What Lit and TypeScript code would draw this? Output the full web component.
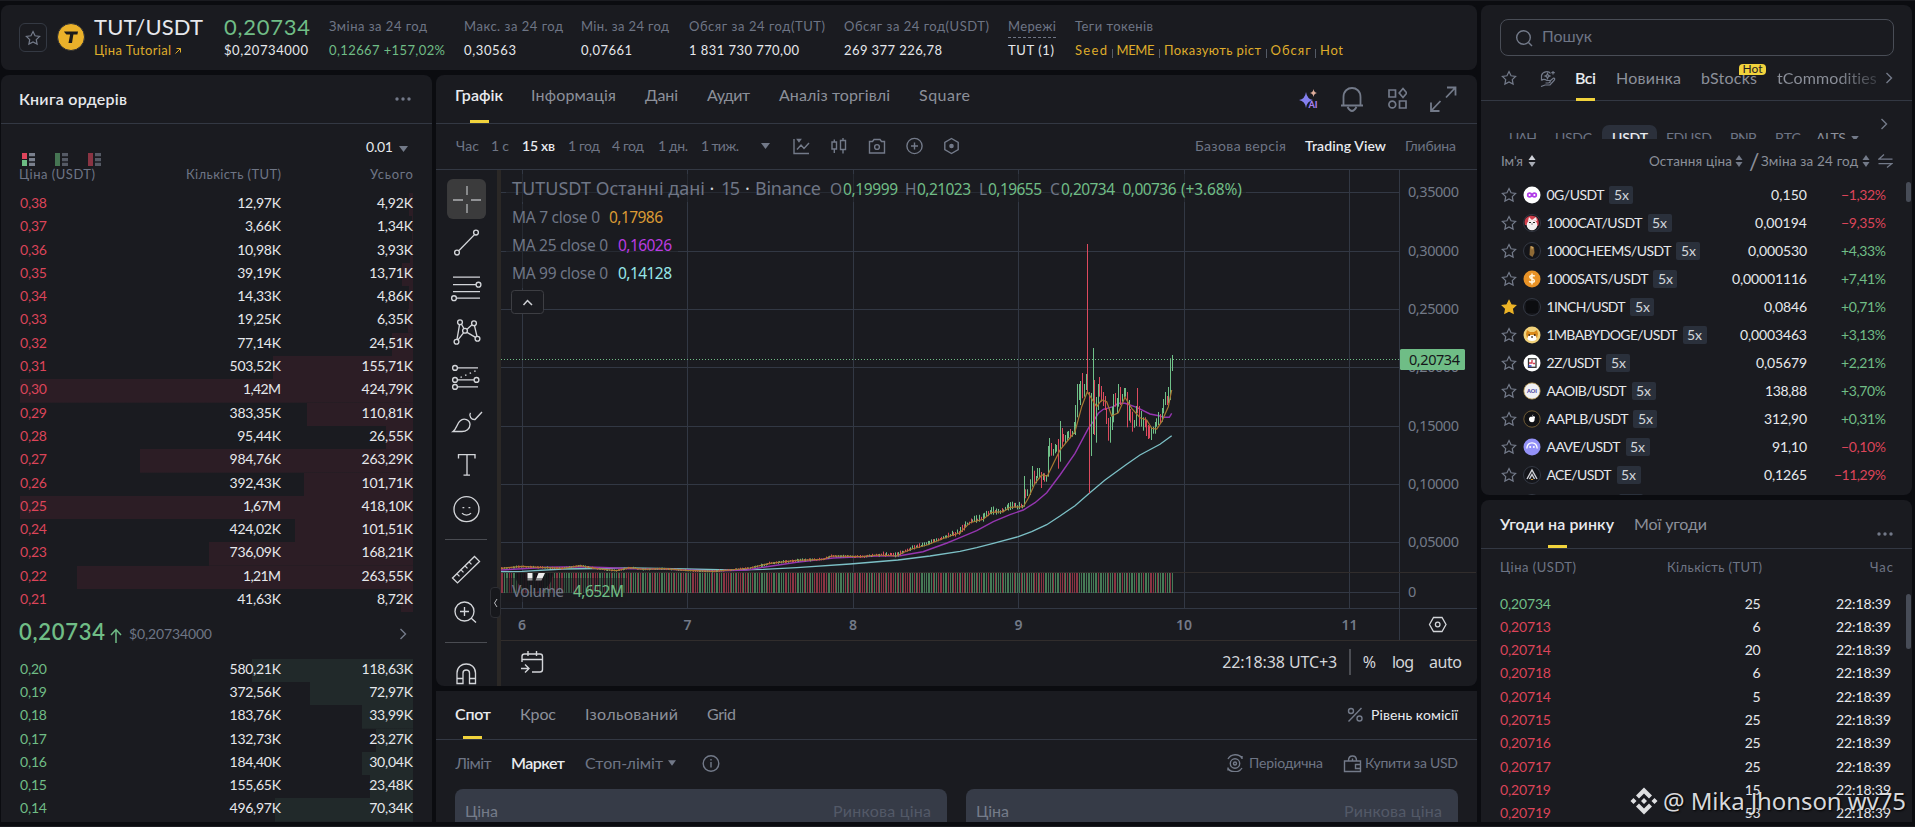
import { LitElement, html, svg, css } from "lit";

type Row = [string, string, string, number];

const asks: Row[] = [
  ["0,38", "12,97K", "4,92K", 4], ["0,37", "3,66K", "1,34K", 1], ["0,36", "10,98K", "3,93K", 3],
  ["0,35", "39,19K", "13,71K", 11], ["0,34", "14,33K", "4,86K", 4], ["0,33", "19,25K", "6,35K", 5],
  ["0,32", "77,14K", "24,51K", 21], ["0,31", "503,52K", "155,71K", 140], ["0,30", "1,42M", "424,79K", 393],
  ["0,29", "383,35K", "110,81K", 106], ["0,28", "95,44K", "26,55K", 27], ["0,27", "984,76K", "263,29K", 273],
  ["0,26", "392,43K", "101,71K", 109], ["0,25", "1,67M", "418,10K", 393], ["0,24", "424,02K", "101,51K", 118],
  ["0,23", "736,09K", "168,21K", 204], ["0,22", "1,21M", "263,55K", 336], ["0,21", "41,63K", "8,72K", 12],
];
const bids: Row[] = [
  ["0,20", "580,21K", "118,63K", 161], ["0,19", "372,56K", "72,97K", 103], ["0,18", "183,76K", "33,99K", 51],
  ["0,17", "132,73K", "23,27K", 37], ["0,16", "184,40K", "30,04K", 51], ["0,15", "155,65K", "23,48K", 43],
  ["0,14", "496,97K", "70,34K", 138],
];

const pairs: [string, number, string, number, string, number][] = [
  ["0G", 58, "0,150", 36, "−1,32%", 45], ["1000CAT", 96, "0,00194", 52, "−9,35%", 45],
  ["1000CHEEMS", 125, "0,000530", 59, "+4,33%", 45], ["1000SATS", 102, "0,00001116", 75, "+7,41%", 45],
  ["1INCH", 79, "0,0846", 43, "+0,71%", 45], ["1MBABYDOGE", 131, "0,0003463", 67, "+3,13%", 45],
  ["2Z", 55, "0,05679", 51, "+2,21%", 45], ["AAOIB", 80, "138,88", 42, "+3,70%", 45],
  ["AAPLB", 82, "312,90", 43, "+0,31%", 45], ["AAVE", 74, "91,10", 35, "−0,10%", 45],
  ["ACE", 65, "0,1265", 43, "−11,29%", 52], ["ACH", 67, "0,00512", 50, "+1,04%", 45],
];

const trades: [string, string, boolean][] = [
  ["0,20734", "25", true], ["0,20713", "6", false], ["0,20714", "20", false], ["0,20718", "6", false],
  ["0,20714", "5", false], ["0,20715", "25", false], ["0,20716", "25", false], ["0,20717", "25", false],
  ["0,20719", "15", false], ["0,20719", "53", false],
];

/* Candles as x, high, low (in thirds of a pixel from the plot's 960/220 corner), 1 = up. */
const candles: [number, number, number, number][] = [
  [192,768,860,1],[196,808,835,0],[203,808,828,1],[210,778,825,1],[217,738,800,1],[223,752,792,0],[229,768,790,1],
  [232,744,775,1],[238,744,775,1],[244,756,804,0],[250,760,780,1],[253,760,785,0],[259,765,785,1],[265,678,770,1],
  [268,654,710,1],[274,669,707,0],[280,687,707,1],[286,672,700,1],[289,675,695,1],[295,657,746,0],[301,603,725,1],
  [307,624,682,0],[310,642,665,0],[316,645,670,1],[322,635,662,1],[325,633,655,1],[331,627,655,0],[337,633,650,1],
  [343,606,642,1],[346,555,645,1],[352,492,592,1],[358,492,540,1],[361,483,555,1],[367,459,535,0],[373,492,530,1],
  [379,462,510,1],[382,72,520,0],[388,516,820,0],[394,519,708,1],[400,384,642,1],[403,480,645,0],[409,531,668,1],
  [415,492,570,1],[418,471,530,0],[424,498,545,0],[430,516,558,0],[436,528,570,0],[439,565,612,0],[445,594,662,0],
  [451,591,668,1],[457,560,630,1],[460,522,607,1],[466,519,560,0],[472,534,580,1],[475,492,560,1],[481,501,555,0],
  [487,522,545,1],[493,504,533,1],[496,504,530,1],[502,516,622,0],[508,540,602,1],[511,567,608,0],[517,575,635,0],
  [523,600,623,1],[529,558,618,1],[532,504,580,0],[538,558,620,0],[544,573,620,1],[550,592,632,1],[556,592,622,0],
  [559,600,648,0],[565,615,657,0],[568,618,655,0],[574,622,660,1],[580,620,641,1],[586,606,641,1],[589,595,620,1],
  [595,576,615,1],[601,582,612,0],[607,564,605,1],[610,537,580,1],[616,516,555,1],[622,528,555,0],[625,501,550,1],
  [631,415,540,1],[637,405,453,1],
];

type P = [number, number];
const near = (a: P[]): P[] => a.map(([x, y]) => [960 + x / 3, 220 + y / 3]);
const far = (a: P[]): P[] => a.map(([x, y]) => [430 + x / 3, 480 + y / 3]);

const ma7: P[] = [
  ...far([[213,265],[277,259],[330,262],[400,265],[450,257],[500,266],[560,272],[600,263],[640,268],[700,266],[770,271],[850,274],[900,270],[960,264],[1020,250],[1100,241],[1180,238],[1205,228],[1260,229]]),
  [862, 556.7], [877, 555], [897, 556], [902, 553], [912, 549], [927, 545], [947, 537],
  ...near([[0,938],[30,908],[70,898],[95,877],[130,875],[150,862],[190,860],[205,835],[225,790],[245,765],[262,768],[300,690],[345,635],[365,560],[382,515],[410,560],[425,540],[440,545],[455,588],[475,578],[495,532],[515,565],[540,593],[560,600],[575,625],[590,627],[605,605],[625,560],[635,510]]),
];
const ma25: P[] = [
  ...far([[213,270],[277,266],[350,262],[450,260],[540,263],[600,266],[700,267],[770,270],[850,273],[950,270],[1000,262],[1100,247],[1210,234]]),
  [877, 556], [900, 555.7], [923, 551.7], [947, 543],
  ...near([[0,953],[50,932],[100,905],[150,884],[190,870],[225,848],[260,818],[300,765],[345,700],[385,625],[400,605],[415,580],[430,568],[460,560],[475,550],[495,550],[530,562],[570,582],[600,588],[612,592],[628,592],[635,580]]),
];
const ma99: P[] = [
  ...far([[213,275],[277,274],[400,267],[600,264],[770,267],[900,270],[1000,268],[1100,263],[1260,252]]),
  [898, 560], [930, 556],
  ...near([[0,994],[50,983],[100,970],[175,950],[215,935],[260,914],[300,888],[345,857],[388,820],[435,780],[500,733],[540,705],[600,673],[635,647]]),
];
const line = (a: P[]) => a.map(([x, y]) => `${x.toFixed(1)},${y.toFixed(1)}`).join(" ");
const at = (a: P[], x: number) => {
  for (let i = 1; i < a.length; i++)
    if (x <= a[i][0]) {
      const [x0, y0] = a[i - 1], [x1, y1] = a[i];
      return y0 + ((y1 - y0) * (x - x0)) / (x1 - x0);
    }
  return a[a.length - 1][1];
};
const rnd = (n: number) => {
  const v = Math.sin(n * 12.9898 + 4.1) * 43758.5453;
  return v - Math.floor(v);
};

/* Early, quiet part of the series plus the volume strip, as two path strings per colour. */
const wick = { up: "", down: "" };
const vol = { up: "", down: "" };
for (let i = 0; i < 391; i++) {
  const x = Math.floor(501 + i * 1.722) + 0.5;
  if (x > 1173) break;
  const up = rnd(i) > 0.44;
  if (x < 1023) {
    const amp = x < 760 ? 0.9 : x < 880 ? 1.4 : x < 950 ? 2.6 : 4.5;
    const y = at(ma7, x) - (x > 880 ? 1 : 0);
    const d = `M${x} ${(y - 0.4 - rnd(i + 500) * amp).toFixed(1)}V${(y + 0.6 + rnd(i + 900) * amp * 0.7).toFixed(1)}`;
    if (up) wick.up += d; else wick.down += d;
  }
  if (up) vol.up += `M${x} 573V593`; else vol.down += `M${x} 573V593`;
}
for (const [x, a, b, up] of candles) {
  const d = `M${Math.floor(960 + x / 3) + 0.5} ${(220 + a / 3).toFixed(1)}V${(220 + b / 3).toFixed(1)}`;
  if (up) wick.up += d; else wick.down += d;
}

/* A run of text set to a given advance width. */
const t = (s: string, w: number, c = "") => html`<span class="t ${c}" data-w=${w}>${s}</span>`;
const ic = (x: number, y: number, w: number, h: number, body: unknown, c = "") =>
  html`<svg class="ic ${c}" width=${w} height=${h} viewBox="${x} ${y} ${w} ${h}">${body}</svg>`;

const starPath = "M9 1.8l2.3 4.7 5.1.7-3.7 3.6.9 5.1L9 13.5l-4.6 2.4.9-5.1L1.6 7.2l5.1-.7z";
const star = (c = "") => html`<svg class="ic ${c}" width="16" height="16" viewBox="0 0 18 18"><path d=${starPath} /></svg>`;
const caret = (w = 9) => html`<svg width=${w} height="6" viewBox="0 0 9 6"><path d="M0 0h9L4.5 6z" fill="#727988" /></svg>`;
const sorter = (a: string, b: string) => html`<svg width="8" height="12" viewBox="0 0 8 12"><path d="M.5 5L4 0l3.500 5z" fill=${a} /><path d="M.5 7L4 12l3.500-5z" fill=${b} /></svg>`;
const chevron = html`<svg class="ic" width="8" height="12" viewBox="0 0 8 12"><path d="M1.500 1l5 5-5 5" /></svg>`;

const coin = (n: string) => {
  const ring = svg`<circle cx="9" cy="9" r="8.500" fill="#14151a" stroke="#343944" />`;
  const g: Record<string, unknown> = {
    "0G": svg`<circle cx="9" cy="9" r="8.500" fill="#fff" /><g fill="none" stroke="#b13be8" stroke-width="1.700"><circle cx="6.600" cy="9" r="1.900" /><circle cx="11.400" cy="9" r="1.900" /></g>`,
    "1000CAT": svg`${ring}<path d="M2 11C0 4 6 1 10 2c5 0 7 6 5 10z" fill="#d13f4c" /><circle cx="9" cy="11" r="5.300" fill="#f1eeee" /><path d="M5 7l1-4 3 3zM9 6l4-3 1 4z" fill="#f1eeee" /><path d="M6 8.500h2M10 8.500h2M8.500 10h1" stroke="#222" />`,
    "1000CHEEMS": svg`${ring}<path d="M7 4l4 1 .5 6-2 4-3-2z" fill="#8f6a35" /><path d="M8 4l2 1-1 3z" fill="#d9b36f" />`,
    "1000SATS": svg`<circle cx="9" cy="9" r="8.500" fill="#e89226" /><path d="M11.800 6.200c-1-1-5-1.200-5 .7 0 2.200 4.600 1.500 4.600 3.800 0 2-4 2-5.200.5M9 3.500v11" fill="none" stroke="#fff4dc" stroke-width="1.500" />`,
    "1INCH": svg`${ring}<rect x="3" y="3" width="12" height="12" rx="2" fill="#0c0d10" />`,
    "1MBABYDOGE": svg`<circle cx="9" cy="9" r="8.500" fill="#f2d27a" /><path d="M3 8l1-4 3 2h4l3-2 1 4-1 4H4z" fill="#d98a1c" /><ellipse cx="9" cy="12" rx="4.500" ry="3" fill="#fff" /><path d="M5.500 9h1.500M11 9h1.500M8.300 11h1.500" stroke="#2b1c10" stroke-width="1.300" />`,
    "2Z": svg`<circle cx="9" cy="9" r="8.500" fill="#fff" /><rect x="5.500" y="4.800" width="7.500" height="8.500" fill="none" stroke="#333" stroke-width="1.300" /><path d="M6 9h3v-3" fill="none" stroke="#d43e52" stroke-width="1.400" /><path d="M5.500 12h3" stroke="#3848c7" stroke-width="1.600" /><path d="M10 9.500h2" stroke="#d43e52" stroke-width="1.600" />`,
    AAOIB: svg`<circle cx="9" cy="9" r="8.100" fill="#f0f1f5" stroke="#c8a659" stroke-width=".8" /><text x="9" y="11" font-size="5.500" font-weight="900" text-anchor="middle" fill="#4a449e">AOI</text>`,
    AAPLB: svg`<circle cx="9" cy="9" r="8.200" fill="#111215" stroke="#6e5a34" /><path d="M9 6.800c3-1.200 3.600.3 2.600 2 .3 2.400-1.600 4-2.600 3.300-1.700.7-3.400-1.500-3-3.500.4-2 1.800-2.200 3-1.800zM9 6.300c0-1.200.7-1.800 1.500-1.900" fill="#fff" />`,
    AAVE: svg`<circle cx="9" cy="9" r="8.500" fill="#9391f7" /><path d="M3.800 10.500C4.500 3 13.500 3 14.200 10.500" fill="none" stroke="#fff" stroke-width="1.400" /><circle cx="7.200" cy="9" r="1" fill="#fff" /><circle cx="10.800" cy="9" r="1" fill="#fff" />`,
    ACE: svg`${ring}<path d="M4 13L9 4l5 9M6.500 13L9 8.500l2.500 4.500" fill="none" stroke="#cfd1d6" stroke-width="1.400" /><path d="M8 13.500h2" stroke="#d89a2b" />`,
  };
  return html`<svg width="18" height="18" viewBox="0 0 18 18">${g[n] ?? ring}</svg>`;
};

const dayLabel = (n: string, x: number) => svg`<text class="day" x=${x} y="630">${n}</text>`;

class AppRoot extends LitElement {
  static styles = css`
    :host { display: block; width: 1915px; height: 827px; overflow: hidden; background: #0b0c10;
      font: 14px/20px Lato, "Open Sans", sans-serif; color: #e6e8ec; box-sizing: border-box; }
    * { box-sizing: border-box; }
    svg { display: block; flex: none; }
    .page { height: 827px; display: grid; grid-template-rows: 1px 821px 1fr 1px; }
    .edge { background: #1a1b20; }
    .main { display: grid; grid-template-columns: 1476px 431px; column-gap: 4px; padding: 4px 0 0 1px; height: 821px; }
    .left { display: grid; grid-template-columns: 431px 1041px; grid-template-rows: 65px 747px; gap: 5px 4px; }
    .card { background: #1a1b20; border-radius: 8px; overflow: hidden; }
    .flatb { border-radius: 8px 8px 0 0; }
    .t { white-space: pre; display: inline-block; }
    .ic { fill: none; stroke: #737a89; stroke-width: 1.4; }
    .mut { color: #6e7585; }
    .tab { color: #8c909a; }
    .b { font-weight: 600; }
    .w { color: #e9ebef; }
    .g { color: #70bd86; }
    .r { color: #dc4459; }
    .y { color: #dfac2b; }
    .right { text-align: right; }

    .head { grid-column: 1 / 3; display: grid; font-size: 13px; padding-left: 18px;
      grid-template-columns: 40px 35px 130px 105px 135px 117px 108px 155px 164px 67px 1fr; }
    .fav { width: 28px; height: 29px; margin-top: 18px; border: 1px solid #343943; border-radius: 6px; display: grid; place-items: center; }
    .logo { margin-top: 18px; margin-left: -2px; }
    .stat { display: flex; flex-direction: column; padding-top: 11px; }
    .stat .t { height: 22px; line-height: 20px; margin-bottom: 2px; align-self: flex-start; }
    .big { padding-top: 8px; }
    .big .t:first-child, .lg { font-size: 22px; height: 26px; line-height: 28px; margin-bottom: 1px; }
    .big .lnk .t { font-size: 13px; height: 20px; line-height: 20px; }
    .lnk { display: flex; align-items: flex-start; gap: 4px; }
    .lnk svg { margin-top: 8px; }
    .net .t { height: auto; line-height: 18px; }
    .net .dash { border-bottom: 1px dashed #6e7585; height: 22px; line-height: 20px; margin-bottom: 3px; }
    .tags { display: flex; }
    .sep { width: 1px; height: 9px; background: #555b66; margin: 9px 4px 0 4.500px; }

    .bar { display: flex; align-items: center; border-bottom: 1px solid #333843; }
    .book .bar { height: 49px; justify-content: space-between; padding: 0 21px 0 18px; font-size: 16px; }
    .opts { height: 40px; display: flex; justify-content: space-between; padding: 19px 24px 0 21px; }
    .modes { display: flex; gap: 20px; padding-top: 10px; }
    .prec { display: flex; gap: 6px; align-items: flex-start; margin-top: -6px; }
    .prec svg { margin-top: 9px; }
    .cols { display: grid; grid-template-columns: 130px 132px 132px; color: #6e7585; padding: 0 19px 0 18px; font-size: 13px; height: 29px; }
    .rows { display: flex; flex-direction: column; padding: 0 19px; }
    .row { height: 23.300px; display: grid; grid-template-columns: 130px 131px 132px; line-height: 20.500px;
      background-repeat: no-repeat; background-position: right; }
    .ask { background-image: linear-gradient(#2c1d25, #2c1d25); }
    .bid { background-image: linear-gradient(#21292a, #21292a); }
    .mid { height: 46.300px; display: grid; grid-template-columns: 91px 19px 1fr 12px; padding: 7px 21px 0 18px; line-height: 30px; }
    .mid svg { margin-top: 9px; }
    .mid .lg { margin-top: -1px; }

    .col { display: grid; grid-template-rows: 611px 131px; row-gap: 5px; }
    .chart { display: grid; grid-template-rows: 49px 46px 1fr; grid-template-columns: minmax(0, 1fr); }
    .tabs { display: grid; font-size: 16px; grid-template-columns: 76px 114px 62px 72px 140px 380px 1fr; padding-left: 19px;
      border-bottom: 1px solid #333843; align-items: start; }
    .tabs > .t { margin-top: 9px; line-height: 22px; }
    .on { position: relative; }
    .on::after { content: ""; position: absolute; left: calc(50% - 9.500px); bottom: var(--d, -19px); width: 19px; height: 3px; background: #f1d33c; }
    .tabs .on { --d: -17px; justify-self: start; }
    .acts { display: flex; gap: 22px; padding-top: 9px; }
    .times { display: grid; align-items: center; border-bottom: 1px solid #333843; padding: 0 0 2px 20px;
      grid-template-columns: 35px 31px 46px 44px 46px 43px 60px 31px 38px 38px 38px 38px 251px 110px 100px 1fr; }
    .body { display: grid; grid-template-columns: 61px 4px 1fr; height: 516px; }
    .tools { display: flex; flex-direction: column; padding-left: 8px; padding-top: 7px; position: relative; }
    .tools .ic { stroke: #d3d5d9; stroke-width: 1.350; }
    .tools hr { border: 0; height: 1px; background: #4a4c52; width: 42px; margin: 6.500px 0 7px 1px; flex: none; }
    .fold { position: absolute; left: 54px; top: 417px; width: 11px; height: 31px; background: #17181c; border: 1px solid #2e2f34; border-radius: 4px;
      display: grid; place-items: center; z-index: 2; }
    .rail { background: #2b2826; }
    .plot { display: grid; grid-template-rows: 471px 45px; font-family: "Noto Sans", sans-serif; }
    .foot { display: flex; align-items: center; font-size: 16px; color: #d4d6da; padding: 0 15px 3px 19px; }
    .foot i { width: 1.500px; height: 26px; background: #4b4d53; margin: 0 12px 0 12px; }
    .foot .sp { flex: 1; }
    .gl { stroke: #323844; stroke-width: 1; }
    .ax { fill: #737a88; font-size: 14.500px; }
    .day { fill: #737a88; font-size: 14px; font-weight: 600; text-anchor: middle; }
    .lg1 { fill: #6f7686; font-size: 18px; }
    .lg2 { fill: #6f7686; font-size: 15.500px; }

    .spot { border-radius: 0; }
    .spot .bar { height: 49px; padding: 0 19px; font-size: 16px; display: grid; grid-template-columns: 65px 65px 122px 640px 24px 1fr; }
    .spot .bar .t { margin-top: -2px; justify-self: start; }
    .spot .on { --d: -15px; }
    .fee { font-size: 14px; }
    .kinds { display: grid; height: 49px; align-items: center; padding: 0 19px 3px 19.500px; font-size: 16px;
      grid-template-columns: 55.500px 74px 83px 34px 524px 23px 94px 22px 1fr; }
    .kinds .s { font-size: 14px; }
    .ins { display: grid; grid-template-columns: 1fr 1fr; gap: 19px; padding: 0 19px; }
    .in { height: 40px; border-radius: 8px; background: #363b47; display: flex; justify-content: space-between; padding: 12px 16px 0 10px; font-size: 16px; color: #757c8a; }
    .in .ph { color: #535967; }

    .side { display: grid; grid-template-rows: 490px 322px; row-gap: 5px; }
    .search { margin: 14px 18px 0 19px; height: 37px; border: 1px solid #494d56; border-radius: 8px; display: flex; align-items: center; gap: 9px; padding-left: 14px; font-size: 16px; }
    .search .t { margin-top: -3px; }
    .cats { height: 45px; display: grid; grid-template-columns: 37px 37px 41px 85px 76px 108px 1fr; align-items: center; padding-left: 20px; font-size: 16px; border-bottom: 1px solid #333843; }
    .cats .t { margin-top: -1px; }
    .cats .on { --d: -13px; justify-self: start; }
    .wrap { position: relative; }
    .fadeout { background: linear-gradient(90deg, #8c909a 55%, #2b2d33); -webkit-background-clip: text; background-clip: text; color: transparent; }
    .hot { position: absolute; left: 38px; top: -4px; height: 11px; width: 27px; border-radius: 4px 4px 4px 0; background: #f1d33c; color: #1f2024; font-size: 12px; line-height: 10px; text-align: center; }
    .quotes { height: 39px; padding: 24px 0 0 28px; display: flex; overflow: hidden; font-size: 14px; }
    .q { display: flex; height: 14px; overflow: hidden; width: 364px; }
    .q > * { margin-top: 3px; line-height: 20px; flex: none; }
    .q .pill { background: #2b303b; border-radius: 7px 7px 0 0; margin-top: 0; padding: 3px 9px 0 10px; height: 30px; width: 55px; }
    .quotes .chv { margin: -7px 0 0 7px; }
    .lh { display: grid; grid-template-columns: 24px 124px 86px 14px 12px 101px 16px 1fr; height: 42px; padding-left: 20px; align-items: center; font-size: 13.500px; color: #8a8f99; }
    .lh > * { margin-top: 0; }
    .lh > :nth-child(2) { padding-left: 3px; }
    .slash { font-size: 23px; line-height: 20px; }
    .list { height: 314px; overflow: hidden; position: relative; margin-top: -1px; }
    .pair { height: 28px; display: grid; grid-template-columns: 22px 24px 1fr 80px 79px 26px; padding-left: 20px; align-items: center; }
    .pair .nm { display: flex; gap: 5px; align-items: center; margin-left: -0.500px; }
    .lev { width: 24px; height: 18px; line-height: 17px; text-align: center; border-radius: 2px; background: #2a303b; color: #d4d7dc; }
    .thumb { position: absolute; left: 425px; width: 5px; border-radius: 3px; background: #474c57; }
    .full { fill: #edb427; stroke: #edb427; }
    .deals { position: relative; border-radius: 8px 8px 0 0; }
    .deals .bar { height: 49px; padding: 0 19px; font-size: 16px; display: grid; grid-template-columns: 134px 243px 1fr; }
    .deals .bar .t { margin-top: 0; justify-self: start; }
    .deals .bar svg { margin-top: 20px; }
    .deals .on { --d: -14px; }
    .deals .cols { grid-template-columns: 130px 132px 131px; height: 44.500px; padding-top: 8px; padding-left: 19px; }
    .deal { display: grid; grid-template-columns: 130px 130.500px 130.500px; height: 23.300px; padding-left: 19px; }
    .stamp { position: absolute; left: 149px; bottom: 0; display: flex; align-items: center; gap: 5px; height: 42px; z-index: 3; font: 24px/42px "Noto Sans", sans-serif; color: #d8d9dc; text-shadow: 1px 1px 2px #000; }
  `;

  firstUpdated() {
    const range = document.createRange();
    this.renderRoot.querySelectorAll<HTMLElement>("[data-w]").forEach((el) => {
      const w = Number(el.dataset.w);
      const n = el.textContent!.length;
      if (!w || n < 2) return;
      range.selectNodeContents(el);
      const s = (w - range.getBoundingClientRect().width) / (n - 1);
      el.style.letterSpacing = `${s.toFixed(3)}px`;
      el.style.marginRight = `${(-s).toFixed(3)}px`;
    });
  }

  head() {
    const sep = html`<span class="sep"></span>`;
    return html`<div class="card head">
      <div class="fav">${star()}</div>
      <svg class="logo" width="28" height="28" viewBox="0 0 28 28"><circle cx="14" cy="14" r="13.500" fill="#eab12a" stroke="#2c2f36" />
        <path d="M7 8.500h14l-.6 3h-4L15 20h-3.500l1.600-8.500H9.500L8 10z" fill="#1b1a1a" /></svg>
      <div class="stat big">${t("TUT/USDT", 109)}<div class="lnk">${t("Ціна Tutorial", 77, "y")}<svg width="6" height="6" viewBox="0 0 6 6"><path d="M.5 5.500l5-5M1.500.5h4v4" fill="none" stroke="#dfac2b" /></svg></div></div>
      <div class="stat big">${t("0,20734", 86, "g")}${t("$0,20734000", 84)}</div>
      <div class="stat">${t("Зміна за 24 год", 98, "mut")}${t("0,12667 +157,02%", 116, "g")}</div>
      <div class="stat">${t("Макс. за 24 год", 99, "mut")}${t("0,30563", 52)}</div>
      <div class="stat">${t("Мін. за 24 год", 88, "mut")}${t("0,07661", 51)}</div>
      <div class="stat">${t("Обсяг за 24 год(TUT)", 136, "mut")}${t("1 831 730 770,00", 110)}</div>
      <div class="stat">${t("Обсяг за 24 год(USDT)", 145, "mut")}${t("269 377 226,78", 98)}</div>
      <div class="stat net">${t("Мережі", 48, "mut dash")}${t("TUT (1)", 46)}</div>
      <div class="stat">${t("Теги токенів", 78, "mut")}<div class="tags y">${t("Seed", 32)}${sep}${t("MEME", 38)}${sep}${t("Показують ріст", 97)}${sep}${t("Обсяг", 40)}${sep}${t("Hot", 23)}</div></div>
    </div>`;
  }

  dots() {
    return html`<svg width="16" height="4" viewBox="0 0 16 4"><g fill="#727988"><circle cx="2" cy="2" r="1.700" /><circle cx="8" cy="2" r="1.700" /><circle cx="14" cy="2" r="1.700" /></g></svg>`;
  }

  book() {
    const mode = (a: string, b: string, c: string) => html`<svg width="13" height="13" viewBox="0 0 13 13">
      <path d="M0 0h5v6H0z" fill=${a} /><path d=${a === b ? "M0 5h5v8H0z" : "M0 7h5v6H0z"} fill=${b} /><path d="M7 0h6v3.300H7zM7 4.900h6v3.300H7zM7 9.700h6V13H7z" fill=${c} /></svg>`;
    const width = (s: string) => 51.5 - (7 - s.length) * (s.endsWith("M") ? 6.75 : 7.7);
    const row = (r: Row, side: string, color: string) => html`<div class="row ${side}" style="background-size:${r[3]}px 100%">
      <span class=${color}>${t(r[0], 27)}</span><span class="right">${t(r[1], width(r[1]))}</span><span class="right">${t(r[2], width(r[2]))}</span></div>`;
    return html`<div class="card flatb book">
      <div class="bar">${t("Книга ордерів", 108, "b")}${this.dots()}</div>
      <div class="opts"><div class="modes">${mode("#e0455c", "#6dbd84", "#7a808d")}${mode("#467553", "#467553", "#555a65")}${mode("#8a3443", "#8a3443", "#555a65")}</div>
        <div class="prec">${t("0.01", 27)}${caret()}</div></div>
      <div class="cols"><span>${t("Ціна (USDT)", 76)}</span><span class="right">${t("Кількість (TUT)", 95)}</span><span class="right">${t("Усього", 43)}</span></div>
      <div class="rows">${asks.map((r) => row(r, "ask", "r"))}</div>
      <div class="mid"><span>${t("0,20734", 86, "g b lg")}</span>
        <svg width="12" height="16" viewBox="0 0 12 16"><path d="M6 15V2M1 7l5-5.500L11 7" fill="none" stroke="#70bd86" stroke-width="1.500" /></svg>
        <span class="mut">${t("$0,20734000", 83)}</span>${chevron}</div>
      <div class="rows">${bids.map((r) => row(r, "bid", "g"))}</div>
    </div>`;
  }

  chart() {
    const o = (x: number, y: number, r = 2.4) => svg`<circle cx=${x} cy=${y} r=${r} />`;
    return html`<div class="card chart">
      <div class="tabs">${t("Графік", 48, "w b on")}${t("Інформація", 85, "tab")}${t("Дані", 33, "tab")}${t("Аудит", 43, "tab")}${t("Аналіз торгівлі", 111, "tab")}${t("Square", 51, "tab")}
        <div class="acts">
          <svg width="20" height="30" viewBox="1299 84 20 30"><path d="M1306 92q1 7 7 8-6 1-7 8-1-7-7-8 6-1 7-8z" fill="#8480f0" /><path d="M1313.500 89q.5 3.500 3.500 4-3 .5-3.500 4-.5-3.500-3.500-4 3-.5 3.500-4z" fill="#dfae9b" /><text x="1308.500" y="108" font-size="9" font-weight="900" fill="#a77ff2">AI</text></svg>
          ${ic(1341, 84, 24, 30, svg`<path stroke-width="1.800" d="M1341 105.500h22M1343.500 105v-8c0-12 17-12 17 0v8M1347.500 107q4.500 8 9 0" />`)}
          ${ic(1387, 84, 20, 30, svg`<g stroke-width="1.700"><path d="M1389 90h6.500v7h-6.500zM1399.500 101h6.500v7h-6.500zM1403 88.500l3.800 4.500-3.800 4.500-3.800-4.500z" /><circle cx="1392.300" cy="104.500" r="3.400" /></g>`)}
          ${ic(1429, 84, 28, 30, svg`<path stroke-width="1.800" d="M1447 87.500h8.500v8M1455 88l-9 9.500M1439.500 111h-8.500v-8.500M1431.500 110.500l9-9.500" />`)}
        </div></div>
      <div class="times">${t("Час", 23, "mut")}${t("1 с", 18, "mut")}${t("15 хв", 33, "w b")}${t("1 год", 32, "mut")}${t("4 год", 32, "mut")}${t("1 дн.", 30, "mut")}${t("1 тиж.", 38, "mut")}
        ${caret()}
        ${ic(792, 137, 18, 18, svg`<path d="M794 139v14.500h15M797 149.500l4-4.500 3 3.500 5-5.500M797.500 139.500l3 0-1.500 2z" />`)}
        ${ic(830, 137, 18, 18, svg`<path d="M832 142h4.500v7H832zM840.500 140.500h5v9h-5zM834.300 139.500v2.500M834.300 149v4M843 138v2.500M843 149.500v4" />`)}
        ${ic(868, 137, 18, 18, svg`<path d="M869.500 141.500h3l1.500-2h6l1.500 2h3v11.500h-15z" /><circle cx="877" cy="147" r="2.400" />`)}
        ${ic(906, 137, 18, 18, svg`<circle cx="914.500" cy="146" r="7.600" /><path d="M914.500 142.500v7M911 146h7" />`)}
        ${ic(944, 137, 18, 18, svg`<path d="M951.500 138.500l6.700 3.800v7.400l-6.700 3.800-6.700-3.800v-7.400z" /><circle cx="951.500" cy="146" r="1.600" fill="#737a89" />`)}
        ${t("Базова версія", 91, "mut")}${t("Trading View", 81, "w b")}${t("Глибина", 51, "mut")}</div>
      <div class="body">
        <div class="tools">
          ${ic(444, 177, 44, 44.4, svg`<rect x="447" y="179" width="39" height="40" rx="6" fill="#3b3b3c" stroke="none" /><path d="M453 200h10M471 200h10M467 186v9M467 204v9" stroke="#aeb0b3" />`)}
          ${ic(444, 221.4, 44, 44.4, svg`${o(457, 253)}${o(476, 233)}<path d="M459 251l15.500-16" />`)}
          ${ic(444, 265.8, 44, 44.4, svg`<path d="M453 277h27M453 284.500h23M453 291.500h27M456.500 298h23.500" />${o(478.500, 284.500)}${o(454, 298)}`)}
          ${ic(444, 310.2, 44, 44.4, svg`${o(460, 322.5)}${o(474, 323.5)}${o(465, 331)}${o(456.500, 342)}${o(477.500, 339)}<path d="M459.500 325l-2.500 14.500M461.500 324.500l2.500 4.500M472 325l-5 4.500M467 332.500l8.500 5M474.500 326l2.500 10.500M463.500 333l-5.500 7" />`)}
          ${ic(444, 354.6, 44, 44.4, svg`${o(455, 367.500)}${o(455, 379.500)}${o(476.500, 379.500)}${o(455, 386.500)}<path d="M457.500 367.500H478M457.500 379.500H474M457.500 386.500H478" /><path d="M460.500 377l16-7" stroke-dasharray="1.500 3.500" />`)}
          ${ic(444, 399, 44, 44.4, svg`<path d="M453 431.500c4-3 4-8 7-10.500 4-4 10-1 10 3.500s-4 7-8 7zM470.500 413c-2 3 1 7 4.500 6.500l7-7.500" />`)}
          ${ic(444, 443.4, 44, 44.4, svg`<path d="M458.500 459v-4h16.500v4M467 455v20.500M463.500 475.500h6.500" />`)}
          ${ic(444, 487.8, 44, 44.4, svg`<circle cx="466.500" cy="509" r="12.500" /><path d="M462 513c2 2.500 7 2.500 9 0M462.500 507.500h1.800M468.500 507.500h1.800" />`)}
          <hr />
          ${ic(444, 546.6, 44, 44.4, svg`<path d="M452.500 577.500l22-21.500 5 5-22 21.500zM457 573.500l2.500 2.500M461 569.500l2.500 2.500M465 565.500l2.500 2.500M469 561.500l2.500 2.500" />`)}
          ${ic(444, 591, 44, 44.4, svg`<circle cx="464.500" cy="611.500" r="9.500" /><path d="M460 611.500h9M464.500 607v9M471 618l5 4.500" />`)}
          <hr />
          ${ic(444, 650, 44, 35, svg`<path d="M457 683.500v-10.500c0-12 18.500-12 18.500 0v10.500h-6v-10.500c0-4-6.500-4-6.500 0v10.500zM457 678.500h6M469.500 678.500h6" />`)}
          <div class="fold"><svg width="5" height="10" viewBox="0 0 5 10"><path d="M4 1L1.500 5 4 9" fill="none" stroke="#b6b8bc" /></svg></div>
        </div>
        <div class="rail"></div>
        <div class="plot">${this.canvas()}
          <div class="foot">
            ${ic(520, 650, 24, 25, svg`<path d="M522 662v-5.500q0-2.500 2.500-2.500H540q2.500 0 2.500 2.500v13q0 2.500-2.500 2.500h-8M522 659.500h20.500M528 651v5M536.500 651v5M521 668.500h8M525 664.500l4 4-4 4" stroke="#d3d5d9" />`)}
            <span class="sp"></span>${t("22:18:38 UTC+3", 115)}<i></i>${t("%", 0)}<span style="width:16px"></span>${t("log", 22)}<span style="width:15px"></span>${t("auto", 33)}
          </div></div>
      </div></div>`;
  }

  canvas() {
    const ys: [number, string][] = [[192.5, "0,35000"], [251.5, "0,30000"], [309.5, "0,25000"], [367.5, "0,20000"], [426.5, "0,15000"], [484.5, "0,10000"], [542.5, "0,05000"]];
    const xs = [522.5, 687.5, 853.5, 1018.5, 1184.5, 1349.5];
    const tx = (s: string, x: number, y: number, w: number, fill = "", c = "lg2") => svg`<text class=${c} x=${x} y=${y} textLength=${w} style=${fill ? `fill:${fill}` : ""}>${s}</text>`;
    const G = "#70bd86";
    return html`<svg width="976" height="471" viewBox="501 170 976 471">
      ${ys.map(([y]) => svg`<path class="gl" d="M501 ${y}H1399" />`)}
      ${xs.map((x) => svg`<path class="gl" d="M${x} 170V608" />`)}
      <path class="gl" d="M501 592.500H1399M501 608.500H1477M1399.500 170V640" />
      <path d="M501 572.500H1476M501 640.500H1477" stroke="#312d2c" />
      <path d=${vol.up} stroke="#467a56" /><path d=${vol.down} stroke="#8a3443" />
      <path d="M515 573a19 19 0 0 0 38 0z" fill="#111216" opacity=".85" />
      <path d="M527.500 573h5v7.500h-5zM538.500 573h6.500l-3.500 7.500h-6z" fill="#eee" />
      <rect x="505" y="578" width="122" height="24" fill="#1a1b20" opacity=".45" />
      <g fill="none"><polyline points=${line(ma99)} stroke="#7cc0c6" stroke-width="1.300" /><polyline points=${line(ma25)} stroke="#9536b0" stroke-width="1.400" /></g>
      <path d=${wick.up} stroke="#6fc088" /><path d=${wick.down} stroke="#dd4a5e" />
      <polyline points=${line(ma7)} fill="none" stroke="#a87832" stroke-width="1.200" />
      <path d="M501 359.500H1400" stroke=${G} stroke-dasharray="1 2" />
      <rect x="506" y="174" width="740" height="28" fill="#1a1b20" opacity=".5" />
      <rect x="506" y="204" width="172" height="84" fill="#1a1b20" opacity=".5" />
      ${tx("TUTUSDT Останні дані", 512, 195, 193, "", "lg1")}${tx("·", 709.5, 195, 6, "#d4d6da", "lg1")}${tx("15", 721, 195, 19, "", "lg1")}${tx("·", 745, 195, 6, "#d4d6da", "lg1")}${tx("Binance", 755, 195, 66, "", "lg1")}
      ${tx("O", 830, 195, 11)}${tx("0,19999", 843, 195, 55, G)}${tx("H", 905, 195, 11)}${tx("0,21023", 917, 195, 54, G)}${tx("L", 979, 195, 8)}${tx("0,19655", 988, 195, 54, G)}${tx("C", 1050, 195, 10)}${tx("0,20734", 1061, 195, 54, G)}${tx("0,00736", 1122.500, 195, 54, G)}${tx("(+3.68%)", 1181, 195, 61, G)}
      ${tx("MA 7 close 0", 512, 222.5, 88)}${tx("0,17986", 609, 222.5, 54, "#db9a34")}
      ${tx("MA 25 close 0", 512, 250.5, 96)}${tx("0,16026", 618, 250.5, 54, "#b93be0")}
      ${tx("MA 99 close 0", 512, 278.5, 96)}${tx("0,14128", 618, 278.5, 54, "#96e6e8")}
      <rect x="511.500" y="290.500" width="32" height="23" rx="3" fill="#1a1b20" stroke="#3d3e43" /><path d="M523.500 305l4-4.500 4.500 4.500" fill="none" stroke="#d0d2d6" stroke-width="1.500" />
      ${tx("Volume", 512, 597, 52, "", "lg2")}${tx("4,652M", 573, 597, 51, G)}
      ${ys.map(([y, s]) => tx(s, 1408, y + 4, 51, "", "ax"))}${tx("0", 1408, 597, 8, "", "ax")}
      <rect x="1400" y="349" width="65" height="21" rx="1.500" fill="#6fbd86" />${tx("0,20734", 1409, 364.5, 51, "#15161a", "ax")}
      ${dayLabel("6", 522)}${dayLabel("7", 687.5)}${dayLabel("8", 853)}${dayLabel("9", 1018.5)}${dayLabel("10", 1184)}${dayLabel("11", 1349.5)}
      <g fill="none" stroke="#d3d5d9" stroke-width="1.300"><path d="M1433.500 617.500h8.500l4 7-4 7h-8.500l-4-7z" /><circle cx="1437.700" cy="624.500" r="2.300" /></g>
    </svg>`;
  }

  spot() {
    return html`<div class="card spot">
      <div class="bar">${t("Спот", 36, "w b on")}${t("Крос", 36, "tab")}${t("Ізольований", 93, "tab")}${t("Grid", 29, "tab")}
        ${ic(1347, 708, 16, 16, svg`<circle cx="1351" cy="712" r="2.500" /><circle cx="1359.500" cy="719.500" r="2.500" /><path d="M1361.500 709l-13 13.500" />`)}
        <span class="fee">${t("Рівень комісії", 87, "w")}</span></div>
      <div class="kinds">${t("Ліміт", 36, "mut")}${t("Маркет", 54, "w b")}${t("Стоп-ліміт", 78, "mut")}${caret(8)}
        ${ic(702, 755, 18, 18, svg`<circle cx="711" cy="764.500" r="7.800" /><path d="M711 763v5.500M711 760v1.600" />`)}
        ${ic(1226, 755, 18, 18, svg`<circle cx="1235" cy="764.500" r="4.700" /><circle cx="1235" cy="764.500" r="1.500" /><path d="M1228 760c3-5.500 11-5.500 14-1M1242 757v3M1242 769c-3 5-11 5-14 .5M1228 768.500v3" />`)}
        ${t("Періодична", 74, "mut s")}
        ${ic(1342, 755, 19, 19, svg`<path d="M1343.500 762h16v10.500h-16zM1354.500 765.500h5v4h-5zM1347.500 761.500c0-6 8-6 8 0M1351.500 759.500v3" />`)}
        ${t("Купити за USD", 93, "mut s")}</div>
      <div class="ins">${[0, 1].map(() => html`<div class="in">${t("Ціна", 33)}${t("Ринкова ціна", 98, "ph")}</div>`)}</div>
    </div>`;
  }

  markets() {
    return html`<div class="card">
      <div class="search">${ic(1515, 28, 18, 18, svg`<circle cx="1523.500" cy="36.500" r="6.800" /><path d="M1528.500 41.500l3.500 3.500" />`)}${t("Пошук", 50, "mut")}</div>
      <div class="cats">${star()}
        ${ic(1537, 69, 18, 18, svg`<path stroke-width="1.200" d="M1540.500 80.500v-5c1-4 7-5 9-2M1540.500 80.500c2-2 4-1 5.500 0h2.500c1.500 1 .5 2.500-1.500 2.500h-2.500M1549 81l3.500-3c1.500 0 1.500 1.500.5 2.500l-4 4.500h-5l-4 1.500M1546.500 73.500l.8 1.700 1.700.8-1.700.8-.8 1.700-.8-1.700-1.700-.8 1.700-.8zM1552 71v3.500M1550.300 72.700h3.500" />`)}
        ${t("Всі", 21, "w b on")}${t("Новинка", 65, "tab")}<span class="tab wrap">${t("bStocks", 56)}<span class="hot">Hot</span></span>${t("tCommodities", 100, "fadeout")}${chevron}</div>
      <div class="quotes"><div class="q mut">${t("UAH", 28)}<span style="width:18px"></span>${t("USDC", 37)}<span style="width:10px"></span><span class="pill w b">${t("USDT", 36)}</span><span style="width:9px"></span>${t("FDUSD", 46)}<span style="width:18px"></span>${t("BNB", 27)}<span style="width:18px"></span>${t("BTC", 26)}<span style="width:15px"></span>${t("ALTS", 30, "tab")}<span style="width:5px"></span><svg style="margin-top:11px" width="8" height="5" viewBox="0 0 9 6"><path d="M0 0h9L4.500 6z" fill="#727988" /></svg></div><span class="chv">${chevron}</span></div>
      <div class="lh">${t("Ім'я", 22)}<span>${sorter("#d0d3d9", "#a8acb5")}</span>${t("Остання ціна", 83)}${sorter("#737a89", "#737a89")}<span class="slash">${t("/", 0)}</span>${t("Зміна за 24 год", 97)}${sorter("#737a89", "#737a89")}
        ${ic(1878, 155, 15, 14, svg`<path d="M1892.500 160h-13.500l5-4.500M1878.500 164.500h13.500l-5 4" stroke-width="1.250" />`)}</div>
      <div class="list">${pairs.map((p) => html`<div class="pair">${p[0] === "1INCH" ? star("full") : star()}${coin(p[0])}
        <span class="nm">${t(p[0] + "/USDT", p[1])}<span class="lev">5x</span></span>
        <span class="right">${t(p[2], p[3])}</span><span class="right ${p[4][0] === "+" ? "g" : "r"}">${t(p[4], p[5])}</span></div>`)}
        <span class="thumb" style="top:1px;height:20px"></span></div>
    </div>`;
  }

  deals() {
    return html`<div class="card deals">
      <div class="bar">${t("Угоди на ринку", 114, "w b on")}${t("Мої угоди", 73, "tab")}${this.dots()}</div>
      <div class="cols"><span>${t("Ціна (USDT)", 76)}</span><span class="right">${t("Кількість (TUT)", 95)}</span><span class="right">${t("Час", 23)}</span></div>
      ${trades.map((d) => html`<div class="deal"><span class=${d[2] ? "g" : "r"}>${t(d[0], 51)}</span><span class="right">${t(d[1], d[1].length * 7.9)}</span><span class="right">${t("22:18:39", 55)}</span></div>`)}
      <span class="thumb" style="top:94px;height:55px"></span>
      <div class="stamp"><svg width="28" height="28" viewBox="0 0 28 28" fill="#dedfe1"><path d="M14 .5l8 8-3 3-5-5-5 5-3-3zM14 27.500l8-8-3-3-5 5-5-5-3 3zM3.500 11l3 3-3 3-3-3zM24.500 11l3 3-3 3-3-3zM14 11l3 3-3 3-3-3z" /></svg>${t("@ Mika Jhonson wv75", 243)}</div>
    </div>`;
  }

  render() {
    return html`<div class="page"><div class="edge"></div>
      <div class="main"><div class="left">${this.head()}${this.book()}<div class="col">${this.chart()}${this.spot()}</div></div>
        <div class="side">${this.markets()}${this.deals()}</div></div>
      <div></div><div class="edge"></div></div>`;
  }
}
customElements.define("app-root", AppRoot);
